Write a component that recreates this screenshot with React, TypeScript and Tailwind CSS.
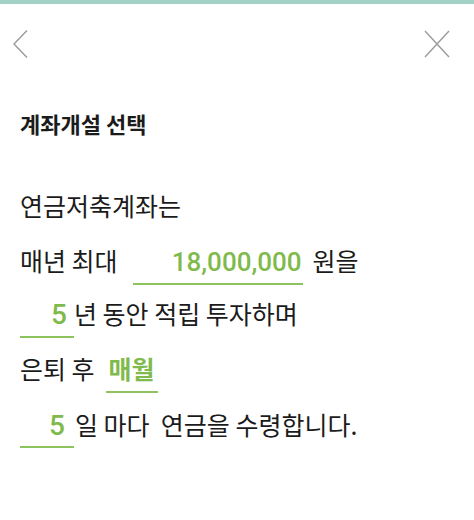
import React from 'react'

const kr = { fontFamily: '"Noto Sans CJK KR", "Noto Sans", sans-serif' }
const num = { fontFamily: 'Roboto, "Noto Sans CJK KR", sans-serif' }

const BackIcon = () => (
  <svg width="16" height="28" viewBox="0 0 16 28" fill="none">
    <path d="M14 0.5 L1 14 L14 27.5" stroke="#9a9a9a" strokeWidth="1.4" />
  </svg>
)

const CloseIcon = () => (
  <svg width="26" height="28" viewBox="0 0 26 28" fill="none">
    <path d="M1 1 L25 27 M25 1 L1 27" stroke="#9a9a9a" strokeWidth="1.4" />
  </svg>
)

export default function App() {
  return (
    <div className="w-[474px] h-[520px] bg-white overflow-hidden text-[#1b1b1b]" style={kr}>
      <div className="h-[4px] bg-[#a4d1c6]" />

      <div className="flex justify-between items-center pl-[13px] pr-[24px] pt-[26px]">
        <BackIcon />
        <CloseIcon />
      </div>

      <h1 className="mt-[54px] px-[20px] text-[22px] leading-[22px] font-bold">계좌개설 선택</h1>

      <div className="px-[20px] text-[25px] leading-[25px]">
        <p className="mt-[59px]">연금저축계좌는</p>

        <div className="mt-[30px] flex items-baseline">
          <span>매년 최대</span>
          <span
            className="ml-[15px] w-[170px] inline-flex justify-end pr-[1px] pb-[8px] border-b-2 border-[#8dc35c] text-[26px] leading-[26px] text-[#7fba4c] font-medium"
            style={num}
          >
            18,000,000
          </span>
          <span className="ml-[10px]">원을</span>
        </div>

        <div className="mt-[16px] flex items-baseline">
          <span
            className="w-[54px] inline-flex justify-end pr-[7px] pb-[7px] border-b-2 border-[#8dc35c] text-[28px] leading-[28px] text-[#7fba4c] font-medium"
            style={num}
          >
            5
          </span>
          <span>년 동안 적립 투자하며</span>
        </div>

        <div className="mt-[18px] flex items-baseline">
          <span>은퇴 후</span>
          <span className="ml-[11px] w-[52px] inline-flex justify-center pb-[10px] border-b-2 border-[#8dc35c] font-bold text-[#7fba4c]">
            매월
          </span>
        </div>

        <div className="mt-[19px] flex items-baseline">
          <span
            className="w-[54px] inline-flex justify-end pr-[9px] pb-[6px] border-b-2 border-[#8dc35c] text-[28px] leading-[28px] text-[#7fba4c] font-medium"
            style={num}
          >
            5
          </span>
          <span className="ml-[1px] whitespace-pre">일 마다  연금을 수령합니다.</span>
        </div>
      </div>
    </div>
  )
}
